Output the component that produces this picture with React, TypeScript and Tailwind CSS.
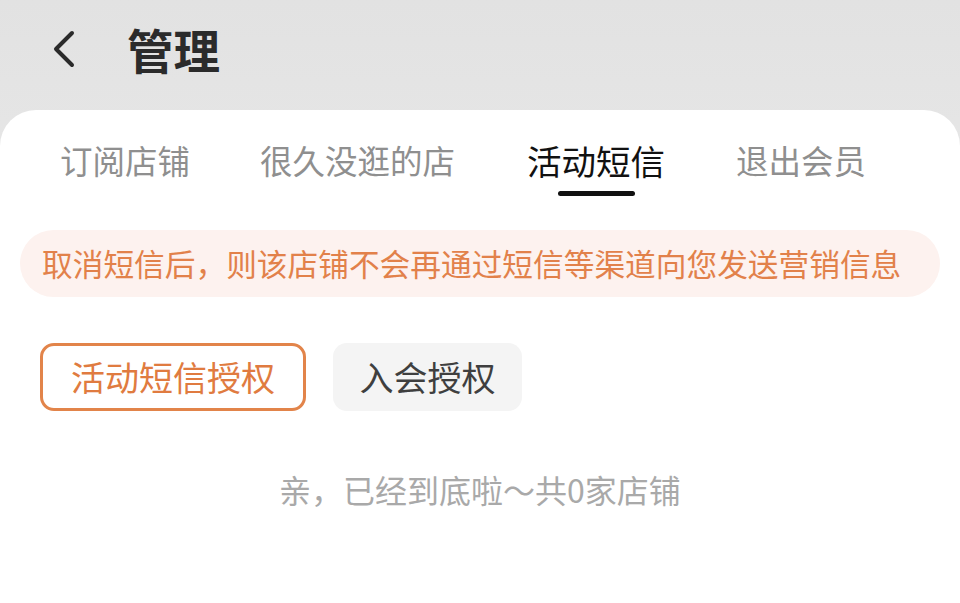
const tabs = ['订阅店铺', '很久没逛的店', '活动短信', '退出会员'];

export default function App() {
  return (
    <div
      className="w-[960px] h-[603px] overflow-hidden bg-gradient-to-b from-[#e2e2e2] to-[#f1f1f1] flex flex-col"
      style={{ fontFamily: '"Noto Sans CJK SC", "Noto Sans", sans-serif' }}
    >
      {/* Header */}
      <div className="h-[110px] shrink-0 flex items-center pl-[51px] pb-[12px]">
        <svg width="26" height="38" viewBox="0 0 26 38" fill="none" className="text-[#2a2a2a]">
          <polyline
            points="21,3 5,19 21,35"
            stroke="currentColor"
            strokeWidth="4"
            strokeLinecap="round"
            strokeLinejoin="round"
          />
        </svg>
        <h1 className="ml-[50px] text-[46.5px] font-bold text-[#2b2b2b] leading-none">管理</h1>
      </div>

      {/* Card */}
      <div className="flex-1 bg-white rounded-t-[36px] flex flex-col">
        {/* Tabs */}
        <div className="flex items-start pl-[60px] pt-[27px] h-[118px] shrink-0">
          {tabs.map((t, i) => (
            <div
              key={t}
              className={`flex flex-col items-center ${i === 1 ? 'ml-[70px]' : i === 2 ? 'ml-[72px]' : i === 3 ? 'ml-[71px]' : ''}`}
            >
              <span
                className={
                  i === 2
                    ? 'text-[34.5px] leading-[46px] text-[#111111]'
                    : 'text-[32.5px] leading-[46px] text-[#8f8f8f]'
                }
              >
                {t}
              </span>
              {i === 2 && <div className="mt-[8px] w-[77px] h-[5px] rounded-full bg-[#111111]" />}
            </div>
          ))}
        </div>

        {/* Notice */}
        <div className="mx-[20px] mt-[2px] h-[67px] shrink-0 rounded-full bg-[#fdf2ef] flex items-center pl-[22px]">
          <span className="text-[30.7px] leading-none text-[#e2814a] whitespace-nowrap">
            取消短信后，则该店铺不会再通过短信等渠道向您发送营销信息
          </span>
        </div>

        {/* Buttons */}
        <div className="flex gap-[27px] pl-[40px] mt-[46px]">
          <button className="w-[266px] h-[68px] rounded-[14px] border-[3px] border-[#e2844a] text-[#e07b40] text-[34px] leading-none flex items-center justify-center">
            活动短信授权
          </button>
          <button className="w-[189px] h-[68px] rounded-[14px] bg-[#f4f4f4] text-[#3f3f3f] text-[34px] leading-none flex items-center justify-center">
            入会授权
          </button>
        </div>

        {/* Footer */}
        <div className="mt-[62px] flex justify-center">
          <span className="text-[32px] leading-none text-[#a9a9a9]">亲，已经到底啦～共0家店铺</span>
        </div>
      </div>
    </div>
  );
}
